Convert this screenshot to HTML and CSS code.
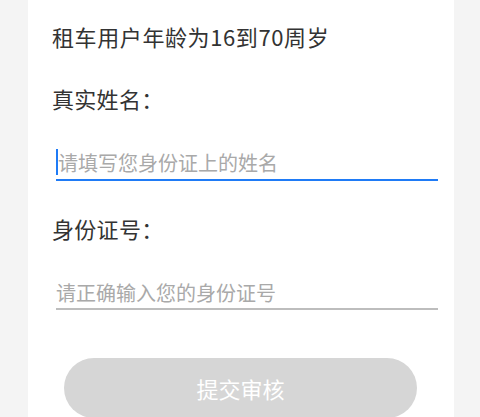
FILE: index.html
```html
<!DOCTYPE html>
<html lang="zh-CN">
<head>
<meta charset="utf-8">
<title>实名认证</title>
<link rel="stylesheet" href="styles.css">
</head>
<body>
<div class="card">
  <div class="form">
    <p class="notice">租车用户年龄为16到70周岁</p>
    <p class="label label-first">真实姓名：</p>
    <div class="field field-focused">
      <span class="caret"></span>
      <span class="placeholder">请填写您身份证上的姓名</span>
    </div>
    <p class="label">身份证号：</p>
    <div class="field">
      <span class="placeholder">请正确输入您的身份证号</span>
    </div>
  </div>
  <button class="submit" type="button">提交审核</button>
</div>
</body>
</html>
```

FILE: styles.css
```css
html, body {
  margin: 0;
  padding: 0;
}
body {
  background: #f4f4f4;
  font-family: "Noto Sans CJK SC", sans-serif;
  color: #333333;
  height: 417px;
  overflow: hidden;
}
.card {
  margin-left: 28px;
  width: 426px;
  min-height: 100vh;
  background: #ffffff;
  display: flex;
  flex-direction: column;
}
.form {
  padding: 21px 0 0 24px;
  display: flex;
  flex-direction: column;
}
.notice {
  margin: 0;
  font-size: 22px;
  line-height: 30px;
  letter-spacing: 0.6px;
}
.label {
  margin: 32px 0 0;
  font-size: 22px;
  line-height: 30px;
  letter-spacing: 0.3px;
}
.label-first {
  margin-top: 32px;
}
.field {
  margin: 35px 16px 0 4px;
  display: flex;
  align-items: flex-start;
  border-bottom: 2px solid #bdbdbd;
  font-size: 20px;
  line-height: 30px;
}
.field-focused {
  border-bottom-color: #1f7bf6;
  padding-bottom: 1px;
}
.caret {
  width: 2px;
  height: 26px;
  margin-top: 1px;
  background: #1f7bf6;
  flex: none;
}
.placeholder {
  color: #a9a9a9;
}
.submit {
  margin: 48px 0 0 36px;
  width: 353px;
  height: 60px;
  border: none;
  border-radius: 30px;
  background: #d6d6d6;
  color: #ffffff;
  font-family: "Noto Sans CJK SC", sans-serif;
  font-size: 22px;
  padding: 0;
}
```
